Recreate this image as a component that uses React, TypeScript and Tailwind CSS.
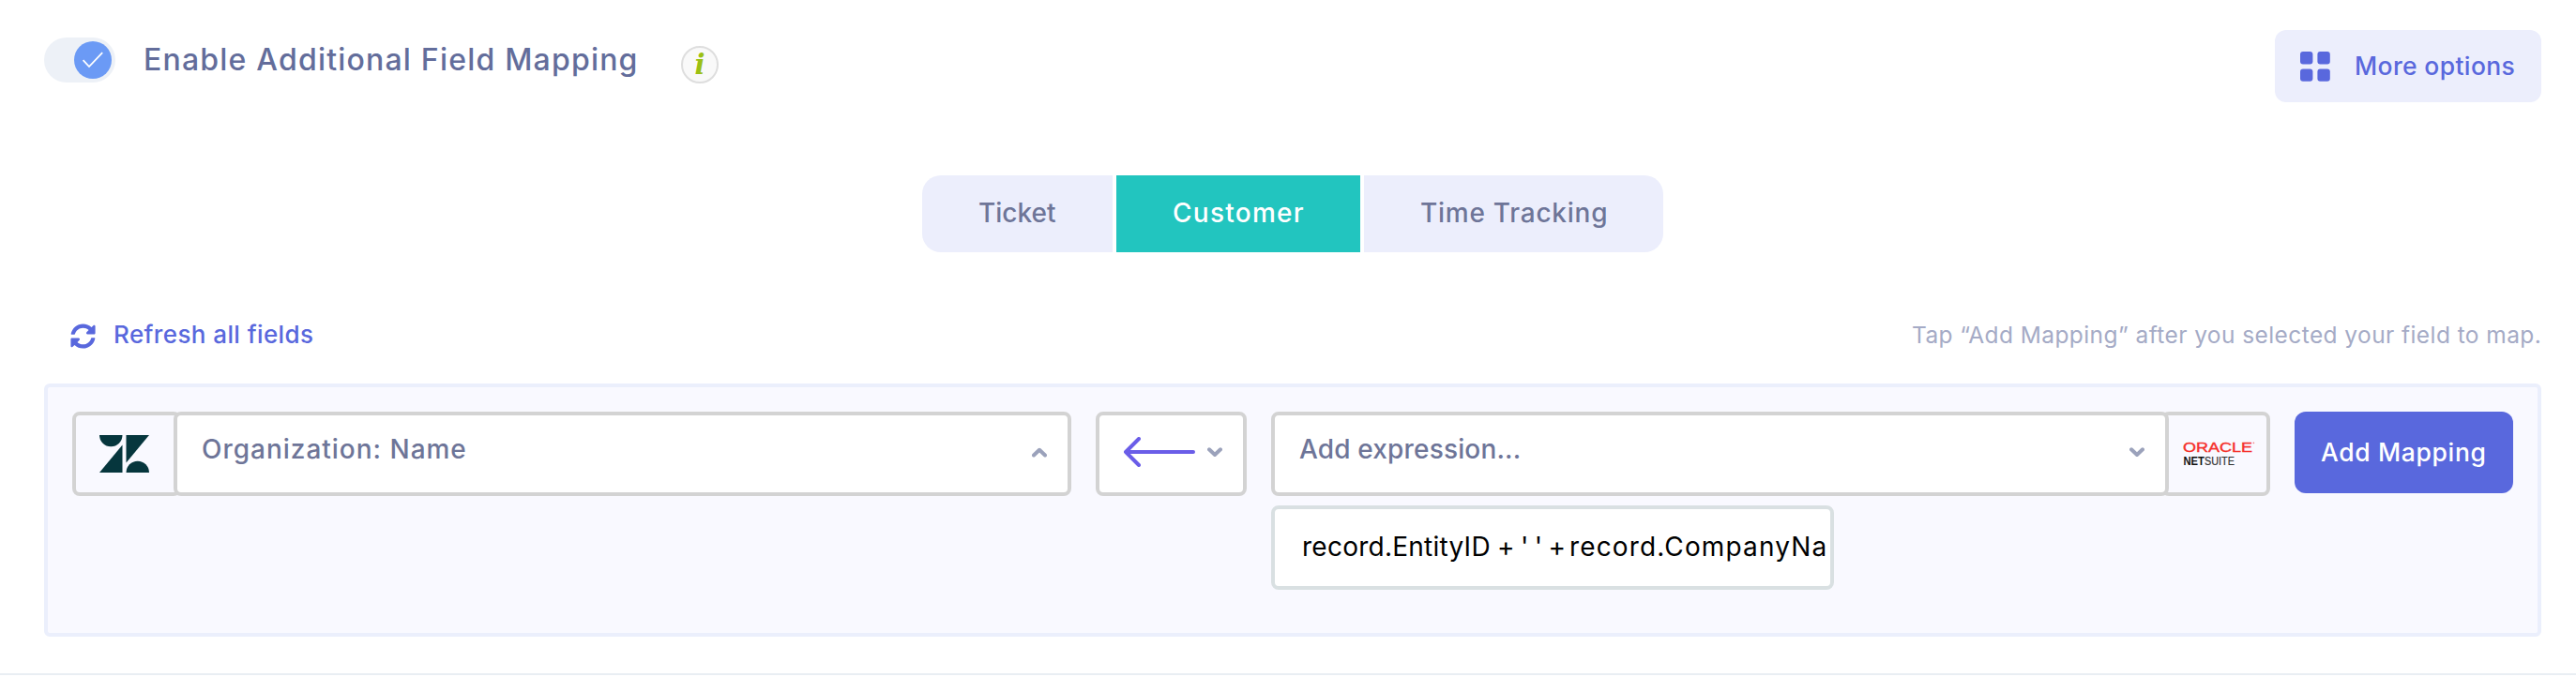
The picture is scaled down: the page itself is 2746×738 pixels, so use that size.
import type { ReactNode } from "react";

function Chevron({ up = false }: { up?: boolean }) {
  return (
    <svg width="16" height="11" viewBox="0 0 16 11" fill="none" stroke="#9ba2bb" strokeWidth="4" strokeLinecap="round" strokeLinejoin="round" className="shrink-0">
      <path d={up ? "M2 8.5 8 2.8l6 5.7" : "M2 2.3 8 8l6-5.7"} />
    </svg>
  );
}

function Toggle() {
  return (
    <button className="flex h-12 w-[76px] items-center justify-end rounded-full bg-[#edf1f7] pr-1">
      <span className="flex size-10 items-center justify-center rounded-full bg-[#6b9af5]">
        <svg width="24" height="18" viewBox="0 0 24 18" fill="none" stroke="#fff" strokeWidth="1.8">
          <path d="M1.6 9.2 8 16 22.2 1.2" />
        </svg>
      </span>
    </button>
  );
}

function ZendeskLogo() {
  return (
    <svg width="53" height="40" viewBox="0 0 53 40" fill="#06363d">
      <path d="M0 0h24.5a12.25 12.25 0 0 1-24.5 0Z" />
      <path d="M24.5 10.5V40H0Z" />
      <path d="M28.5 0H53L28.5 29.5Z" />
      <path d="M28.5 40a12.25 12.25 0 0 1 24.5 0Z" />
    </svg>
  );
}

function NetsuiteLogo() {
  return (
    <svg width="80" height="40" viewBox="0 -6 80 40" className="shrink-0 overflow-visible font-['Liberation_Sans',sans-serif]">
      <text x="0" y="12" fontSize="15" fill="#f5302b" stroke="#f5302b" strokeWidth="0.4" textLength="74" lengthAdjust="spacingAndGlyphs">ORACLE</text>
      <circle cx="75.4" cy="2.4" r="0.8" fill="#f5302b" opacity="0.6" />
      <text x="0.5" y="26" fontSize="12.4" fontWeight="700" fill="#111" textLength="22.5" lengthAdjust="spacingAndGlyphs">NET</text>
      <text x="23" y="26" fontSize="12.4" fill="#333" stroke="#333" strokeWidth="0.2" textLength="32" lengthAdjust="spacingAndGlyphs">SUITE</text>
    </svg>
  );
}

function Field({ children, className = "" }: { children: ReactNode; className?: string }) {
  return (
    <div className={`flex h-[90px] items-center rounded-lg border-4 border-[#d3d3d3] ${className}`}>{children}</div>
  );
}

export default function App() {
  return (
    <main className="h-[738px] w-[2746px] overflow-hidden bg-white font-['Inter','Open_Sans',sans-serif] font-medium whitespace-nowrap">
      <header className="flex items-start justify-between pt-8 pr-[37px] pl-[47px]">
        <div className="flex h-16 items-center">
          <Toggle />
          <h1 className="ml-[30px] w-[573px] text-[32px] leading-10 font-medium tracking-[1.2px] text-[#636d9b]">Enable Additional Field Mapping</h1>
          <span className="mt-[10px] flex size-10 items-center justify-center rounded-full border-2 border-[#dedede] bg-[#f9f9f9] font-['DejaVu_Serif',serif] text-[29px] leading-none font-bold text-[#9bc013] italic">i</span>
        </div>
        <button className="flex h-[77px] w-[284px] items-center rounded-xl bg-[#eceefc] pl-[27px] text-[#5968dd]">
          <svg width="32" height="32" viewBox="0 0 32 32" fill="currentColor">
            <rect width="13.4" height="13.4" rx="3" />
            <rect x="18.4" width="13.4" height="13.4" rx="3" />
            <rect y="18.4" width="13.4" height="13.4" rx="3" />
            <rect x="18.4" y="18.4" width="13.4" height="13.4" rx="3" />
          </svg>
          <span className="ml-[26px] pb-0.5 text-[26.5px] leading-8 tracking-[0.36px]">More options</span>
        </button>
      </header>

      <nav className="mt-[78px] ml-[983px] flex h-[82px] w-[790px] gap-1 text-[28px] leading-9 text-[#6e7598]">
        <button className="flex w-[203px] items-center rounded-l-[20px] bg-[#eceefc] pb-0.5 pl-[60px]">Ticket</button>
        <button className="flex w-[260px] items-center bg-[#22c5bf] pb-0.5 pl-[60px] tracking-[1.25px] text-white">Customer</button>
        <button className="flex flex-1 items-center rounded-r-[20px] bg-[#eceefc] pb-0.5 pl-[60px] tracking-[0.75px]">Time Tracking</button>
      </nav>

      <div className="mt-[68px] flex h-10 items-center justify-between pr-[37px] pl-[75px]">
        <button className="flex items-center text-[#5968dd]">
          <svg width="27" height="27" viewBox="0 0 512 512" fill="currentColor" className="mt-[3px]">
            <path d="M370.72 133.28C339.458 104.008 298.888 87.962 255.848 88c-77.458.068-144.328 53.178-162.791 126.85-1.344 5.363-6.122 9.15-11.651 9.15H24.103c-7.498 0-13.194-6.807-11.807-14.176C33.933 94.924 134.813 8 256 8c66.448 0 126.791 26.136 171.315 68.685L463.03 40.97C478.149 25.851 504 36.559 504 57.941V192c0 13.255-10.745 24-24 24H345.941c-21.382 0-32.09-25.851-16.971-40.971l41.75-41.749zM32 296h134.059c21.382 0 32.09 25.851 16.971 40.971l-41.75 41.75c31.262 29.273 71.835 45.319 114.876 45.28 77.418-.07 144.315-53.144 162.787-126.849 1.344-5.363 6.122-9.15 11.651-9.15h57.304c7.498 0 13.194 6.807 11.807 14.176C478.067 417.076 377.187 504 256 504c-66.448 0-126.791-26.136-171.315-68.685L48.97 471.03C33.851 486.149 8 475.441 8 454.059V320c0-13.255 10.745-24 24-24z" />
          </svg>
          <span className="ml-[19px] text-[26px] leading-8 tracking-[0.4px]">Refresh all fields</span>
        </button>
        <p className="w-[671px] pb-px text-[24.5px] leading-8 font-normal tracking-[0.42px] text-[#a5abc6]">Tap “Add Mapping” after you selected your field to map.</p>
      </div>

      <section className="mt-8 mr-[37px] ml-[47px] flex h-[270px] items-start gap-[26px] rounded-md border-4 border-[#ebeffc] bg-[#f9f9ff] p-[26px] text-[28px] leading-9 text-[#6e7598]">
        <div className="flex w-[1065px]">
          <Field className="-mr-2 w-[116px] pl-[25px]">
            <ZendeskLogo />
          </Field>
          <Field className="flex-1 justify-between bg-white pr-[22px] pb-1 pl-[26px]">
            <span className="pb-1.5 tracking-[0.98px]">Organization: Name</span>
            <Chevron up />
          </Field>
        </div>

        <Field className="w-[161px] justify-between bg-white pr-[22px] pb-1 pl-[26px]">
          <svg width="76" height="32" viewBox="0 0 76 32" fill="none" stroke="#6a5de8" strokeWidth="4" strokeLinecap="round" strokeLinejoin="round">
            <path d="M74 16H2M16 2 2 16l14 14" />
          </svg>
          <Chevron />
        </Field>

        <div className="flex w-[1065px] flex-col gap-2.5">
          <div className="flex">
            <Field className="z-10 w-[957px] justify-between bg-white pr-[22px] pb-1 pl-[26px]">
              <span className="pb-1.5 tracking-[0.16px]">Add expression...</span>
              <Chevron />
            </Field>
            <Field className="-ml-2 w-[116px] pl-[19px]">
              <NetsuiteLogo />
            </Field>
          </div>
          <div className="flex h-[90px] w-[600px] items-center overflow-hidden rounded-lg border-4 border-[#d9e0e2] bg-white pb-0.5 pl-[29px] font-normal text-black">
            <span className="w-[208px] shrink-0 tracking-[0.25px]">record.EntityID</span>
            <span className="w-[77px] shrink-0 [word-spacing:-1.5px]">+ ' ' +</span>
            <span className="tracking-[1.15px]">record.CompanyNa</span>
          </div>
        </div>

        <button className="flex h-[87px] w-[233px] items-center rounded-xl bg-[#5968dd] pb-0.5 pl-[28px] text-[26.5px] tracking-[0.65px] text-white">Add Mapping</button>
      </section>

      <hr className="mt-[39px] border-t-2 border-[#e9eef3]" />
    </main>
  );
}
